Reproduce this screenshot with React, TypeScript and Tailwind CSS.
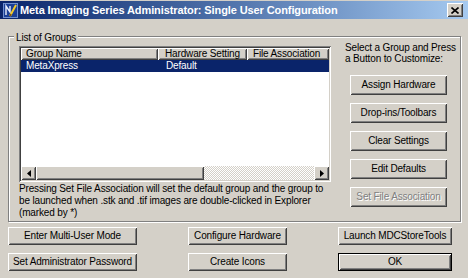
import React from "react";

const raised =
  "bg-[#d4d0c8] shadow-[inset_1px_1px_0_#fff,inset_-1px_-1px_0_#404040,inset_2px_2px_0_#d4d0c8,inset_-2px_-2px_0_#808080]";

function Btn({
  label,
  w,
  h,
  disabled,
  isDefault,
}: {
  label: string;
  w: string;
  h: string;
  disabled?: boolean;
  isDefault?: boolean;
}) {
  return (
    <div
      className={`${w} ${h} ${raised} flex items-center justify-center ${
        isDefault ? "border border-black" : ""
      } ${disabled ? "text-[#808080] [text-shadow:1px_1px_0_#fff]" : "text-black"}`}
    >
      <span className="leading-none">{label}</span>
    </div>
  );
}

function TitleIcon() {
  return (
    <svg width="15" height="15" viewBox="0 0 15 15">
      <rect x="0" y="0" width="15" height="15" fill="#1b3f95" />
      <rect x="0.5" y="0.5" width="14" height="14" fill="none" stroke="#6f8fd0" />
      <path d="M3 12 V3 L7 9 V3" fill="none" stroke="#e8eefc" strokeWidth="1.4" />
      <path d="M7 13 L13 2" stroke="#f3c928" strokeWidth="2" />
      <path d="M7 13 L8 11" stroke="#7a4b10" strokeWidth="1.5" />
    </svg>
  );
}

export default function App() {
  return (
    <div className="w-[468px] h-[278px] bg-[#d4d0c8] overflow-hidden font-['Liberation_Sans',Arial,sans-serif] text-[10px] tracking-[-0.15px] text-black">
      {/* Title bar */}
      <div className="pt-[1px]">
        <div className="h-[18px] bg-linear-to-r from-[#0a246a] to-[#a6caf0] flex items-center pl-[3px] pr-[5px]">
          <TitleIcon />
          <span className="ml-[2px] text-white font-bold text-[11px] tracking-[-0.1px] leading-none">
            Meta Imaging Series Administrator: Single User Configuration
          </span>
          <div className={`ml-auto w-[16px] h-[14px] ${raised} flex items-center justify-center`}>
            <svg width="8" height="7" viewBox="0 0 8 7">
              <path d="M0.5 0.5 L7.5 6.5 M7.5 0.5 L0.5 6.5" stroke="#000" strokeWidth="1.6" />
            </svg>
          </div>
        </div>
      </div>

      {/* Group box */}
      <div className="relative mt-[17px] ml-[8px] w-[453px] h-[186px] border border-[#808080] shadow-[inset_1px_1px_0_#fff,1px_1px_0_#fff] pt-[5px] pl-[10px] flex">
        <div className="absolute left-[5px] top-[-5px] px-[2px] bg-[#d4d0c8] leading-[12px]">
          List of Groups
        </div>

        {/* Left column */}
        <div className="w-[312px] flex flex-col">
          <div className="mt-[4px] h-[136px] bg-white shadow-[inset_1px_1px_0_#808080,inset_-1px_-1px_0_#fff,inset_2px_2px_0_#404040,inset_-2px_-2px_0_#d4d0c8] p-[2px] flex flex-col">
            {/* Header */}
            <div className="flex h-[12px] overflow-hidden">
              <div className={`w-[137px] shrink-0 ${raised} pl-[5px] flex items-center leading-none`}>
                Group Name
              </div>
              <div className={`w-[89px] shrink-0 ${raised} pl-[7px] flex items-center leading-none whitespace-nowrap overflow-hidden`}>
                Hardware Setting
              </div>
              <div className={`flex-1 ${raised} pl-[6px] flex items-center leading-none whitespace-nowrap`}>
                File Association
              </div>
            </div>
            {/* Selected row */}
            <div className="flex h-[12px] bg-[#0a246a] text-white items-center leading-none">
              <div className="w-[137px] pl-[5px]">MetaXpress</div>
              <div className="pl-[8px]">Default</div>
            </div>
            <div className="flex-1" />
            {/* Horizontal scrollbar */}
            <div className="flex h-[14px]">
              <div className={`w-[15px] ${raised} flex items-center justify-center`}>
                <svg width="4" height="7" viewBox="0 0 4 7">
                  <path d="M4 0 L0 3.5 L4 7 Z" fill="#000" />
                </svg>
              </div>
              <div className={`w-[168px] ${raised}`} />
              <div className="flex-1 bg-[repeating-conic-gradient(#d4d0c8_0_25%,#ffffff_0_50%)] bg-[length:2px_2px]" />
              <div className={`w-[15px] ${raised} flex items-center justify-center`}>
                <svg width="4" height="7" viewBox="0 0 4 7">
                  <path d="M0 0 L4 3.5 L0 7 Z" fill="#000" />
                </svg>
              </div>
            </div>
          </div>
          <div className="mt-[1px] leading-[12px] whitespace-nowrap">
            <div>Pressing Set File Association will set the default group and the group to</div>
            <div>be launched when .stk and .tif images are double-clicked in Explorer</div>
            <div>(marked by *)</div>
          </div>
        </div>

        {/* Right column */}
        <div className="flex-1 flex flex-col">
          <div className="pl-[14px] leading-[11px] whitespace-nowrap">
            <div>Select a Group and Press</div>
            <div>a Button to Customize:</div>
          </div>
          <div className="mt-[11px] ml-[19px] flex flex-col gap-[8px]">
            <Btn label="Assign Hardware" w="w-[97px]" h="h-[20px]" />
            <Btn label="Drop-ins/Toolbars" w="w-[97px]" h="h-[20px]" />
            <Btn label="Clear Settings" w="w-[97px]" h="h-[20px]" />
            <Btn label="Edit Defaults" w="w-[97px]" h="h-[20px]" />
            <Btn label="Set File Association" w="w-[97px]" h="h-[20px]" disabled />
          </div>
        </div>
      </div>

      {/* Bottom buttons */}
      <div className="mt-[5px] pl-[8px] flex gap-[51px]">
        <div className="flex flex-col gap-[8px]">
          <Btn label="Enter Multi-User Mode" w="w-[129px]" h="h-[18px]" />
          <Btn label="Set Administrator Password" w="w-[129px]" h="h-[18px]" />
        </div>
        <div className="flex flex-col gap-[8px]">
          <Btn label="Configure Hardware" w="w-[99px]" h="h-[18px]" />
          <Btn label="Create Icons" w="w-[99px]" h="h-[18px]" />
        </div>
        <div className="flex flex-col gap-[8px]">
          <Btn label="Launch MDCStoreTools" w="w-[114px]" h="h-[18px]" />
          <Btn label="OK" w="w-[114px]" h="h-[18px]" isDefault />
        </div>
      </div>
    </div>
  );
}
